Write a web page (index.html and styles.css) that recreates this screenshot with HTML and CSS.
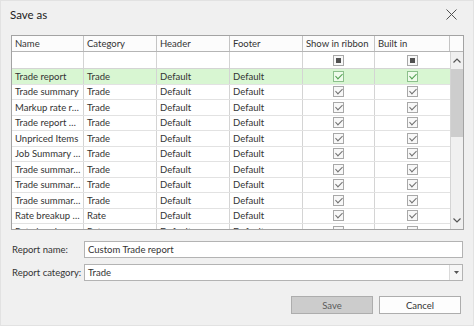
FILE: index.html
```html
<!DOCTYPE html>
<html>
<head>
  <title>Save as</title>
  <link rel="stylesheet" href="styles.css">
</head>
<body>
  <div class="dialog">
    <div class="titlebar">
      <span class="title">Save as</span>
      <svg class="close" width="11" height="11" viewBox="0 0 11 11"><path d="M0.5 0.5 L10.5 10.5 M10.5 0.5 L0.5 10.5" stroke="#505050" stroke-width="1" fill="none"/></svg>
    </div>
    <div class="grid">
      <div class="row head">
        <div class="cell c1">Name</div>
        <div class="cell c2">Category</div>
        <div class="cell c3">Header</div>
        <div class="cell c4">Footer</div>
        <div class="cell c5">Show in ribbon</div>
        <div class="cell c6">Built in</div>
        <div class="cell c7"></div>
      </div>
      <div class="body">
        <div class="rows">
          <div class="row filter">
            <div class="cell c1"></div>
            <div class="cell c2"></div>
            <div class="cell c3"></div>
            <div class="cell c4"></div>
            <div class="cell c5 mid"><span class="chk mixed"></span></div>
            <div class="cell c6 mid"><span class="chk mixed"></span></div>
          </div>
          <div class="row data selected">
            <div class="cell c1">Trade report</div><div class="cell c2">Trade</div><div class="cell c3">Default</div><div class="cell c4">Default</div>
            <div class="cell c5 mid"><span class="chk"></span></div><div class="cell c6 mid"><span class="chk"></span></div>
          </div>
          <div class="row data">
            <div class="cell c1">Trade summary</div><div class="cell c2">Trade</div><div class="cell c3">Default</div><div class="cell c4">Default</div>
            <div class="cell c5 mid"><span class="chk"></span></div><div class="cell c6 mid"><span class="chk"></span></div>
          </div>
          <div class="row data">
            <div class="cell c1">Markup rate r…</div><div class="cell c2">Trade</div><div class="cell c3">Default</div><div class="cell c4">Default</div>
            <div class="cell c5 mid"><span class="chk"></span></div><div class="cell c6 mid"><span class="chk"></span></div>
          </div>
          <div class="row data">
            <div class="cell c1">Trade report …</div><div class="cell c2">Trade</div><div class="cell c3">Default</div><div class="cell c4">Default</div>
            <div class="cell c5 mid"><span class="chk"></span></div><div class="cell c6 mid"><span class="chk"></span></div>
          </div>
          <div class="row data">
            <div class="cell c1">Unpriced Items</div><div class="cell c2">Trade</div><div class="cell c3">Default</div><div class="cell c4">Default</div>
            <div class="cell c5 mid"><span class="chk"></span></div><div class="cell c6 mid"><span class="chk"></span></div>
          </div>
          <div class="row data">
            <div class="cell c1">Job Summary …</div><div class="cell c2">Trade</div><div class="cell c3">Default</div><div class="cell c4">Default</div>
            <div class="cell c5 mid"><span class="chk"></span></div><div class="cell c6 mid"><span class="chk"></span></div>
          </div>
          <div class="row data">
            <div class="cell c1">Trade summar…</div><div class="cell c2">Trade</div><div class="cell c3">Default</div><div class="cell c4">Default</div>
            <div class="cell c5 mid"><span class="chk"></span></div><div class="cell c6 mid"><span class="chk"></span></div>
          </div>
          <div class="row data">
            <div class="cell c1">Trade summar…</div><div class="cell c2">Trade</div><div class="cell c3">Default</div><div class="cell c4">Default</div>
            <div class="cell c5 mid"><span class="chk"></span></div><div class="cell c6 mid"><span class="chk"></span></div>
          </div>
          <div class="row data">
            <div class="cell c1">Trade summar…</div><div class="cell c2">Trade</div><div class="cell c3">Default</div><div class="cell c4">Default</div>
            <div class="cell c5 mid"><span class="chk"></span></div><div class="cell c6 mid"><span class="chk"></span></div>
          </div>
          <div class="row data">
            <div class="cell c1">Rate breakup …</div><div class="cell c2">Rate</div><div class="cell c3">Default</div><div class="cell c4">Default</div>
            <div class="cell c5 mid"><span class="chk"></span></div><div class="cell c6 mid"><span class="chk"></span></div>
          </div>
          <div class="row data">
            <div class="cell c1">Rate breakup …</div><div class="cell c2">Rate</div><div class="cell c3">Default</div><div class="cell c4">Default</div>
            <div class="cell c5 mid"><span class="chk"></span></div><div class="cell c6 mid"><span class="chk"></span></div>
          </div>
        </div>
        <div class="scrollbar">
          <div class="arrow"><svg width="8" height="5" viewBox="0 0 8 5"><path d="M0.5 4.5 L4 1 L7.5 4.5" stroke="#555" stroke-width="1.2" fill="none"/></svg></div>
          <div class="thumb"></div>
          <div class="track"></div>
          <div class="arrow"><svg width="8" height="5" viewBox="0 0 8 5"><path d="M0.5 0.5 L4 4 L7.5 0.5" stroke="#555" stroke-width="1.2" fill="none"/></svg></div>
        </div>
      </div>
    </div>
    <div class="fields">
      <div class="field">
        <span class="label">Report name:</span>
        <div class="input">Custom Trade report</div>
      </div>
      <div class="field">
        <span class="label">Report category:</span>
        <div class="input combo">
          <span class="value">Trade</span>
          <span class="drop"><svg width="5" height="3" viewBox="0 0 5 3"><path d="M0 0 L5 0 L2.5 3 Z" fill="#555"/></svg></span>
        </div>
      </div>
    </div>
    <div class="buttons">
      <div class="btn save">Save</div>
      <div class="btn cancel">Cancel</div>
    </div>
  </div>
</body>
</html>
```

FILE: styles.css
```css
body {
  margin: 0;
  padding: 0;
  background: #f0f0f0;
  font-family: Lato, "Open Sans", sans-serif;
  font-size: 9.5px;
  color: #333;
}
.dialog {
  width: 474px;
  height: 326px;
  box-sizing: border-box;
  border: 1px solid #e2e2e2;
  display: flex;
  flex-direction: column;
  overflow: hidden;
}
.titlebar {
  height: 26px;
  display: flex;
  justify-content: space-between;
  align-items: center;
  padding: 0 16px 0 9px;
}
.title {
  font-size: 11.5px;
  color: #222;
}
.grid {
  margin: 8px 0 0 10px;
  width: 453px;
  box-sizing: border-box;
  border: 1px solid #a3a3a3;
  background: white;
}
.row {
  display: flex;
}
.cell {
  box-sizing: border-box;
  border-right: 1px solid #d4d4d4;
  padding-left: 3px;
  white-space: nowrap;
  overflow: hidden;
  display: flex;
  align-items: center;
}
.c1 { width: 72px; }
.c2 { width: 73px; }
.c3 { width: 73px; }
.c4 { width: 73px; }
.c5 { width: 72px; }
.c6 { width: 75px; border-right: none; }
.c7 { width: 13px; border-right: none; }
.head {
  height: 15px;
  border-bottom: 1px solid #b5b5b5;
  background: #fcfcfc;
}
.head .cell {
  border-right-color: #c4c4c4;
}
.head .c6 {
  border-right: 1px solid #c4c4c4;
}
.body {
  display: flex;
  height: 177px;
  overflow: hidden;
}
.rows {
  width: 438px;
  border-right: 1px solid #d4d4d4;
}
.filter {
  height: 16px;
  border-bottom: 1px solid #d4d4d4;
}
.data {
  height: 15.5px;
  box-sizing: border-box;
  border-bottom: 1px solid #e2e2e2;
}
.selected {
  background: #d8f6d2;
}
.mid {
  justify-content: center;
  padding-left: 0;
}
.chk {
  width: 11px;
  height: 11px;
  box-sizing: border-box;
  border: 1px solid #a8a8a8;
  background: #f8f8f8;
  position: relative;
}
.chk::after {
  content: "";
  position: absolute;
  left: 3px;
  top: 0px;
  width: 3px;
  height: 6px;
  border: solid #707070;
  border-width: 0 1px 1px 0;
  transform: rotate(45deg);
}
.selected .chk {
  border-color: #8cc08c;
  background: #eefbea;
}
.selected .chk::after {
  border-color: #4f9f4f;
}
.chk.mixed::after {
  left: 2px;
  top: 2px;
  width: 5px;
  height: 5px;
  border: none;
  background: #505050;
  transform: none;
}
.scrollbar {
  width: 14px;
  display: flex;
  flex-direction: column;
  background: #f0f0f0;
}
.arrow {
  height: 17px;
  display: flex;
  justify-content: center;
  align-items: center;
}
.thumb {
  height: 68px;
  background: #cdcdcd;
}
.track {
  flex: 1;
}
.fields {
  margin: 11px 0 0 11px;
  display: flex;
  flex-direction: column;
  gap: 6px;
}
.field {
  display: flex;
  align-items: center;
}
.label {
  width: 72px;
  white-space: nowrap;
  color: #333;
}
.input {
  width: 379px;
  height: 17px;
  box-sizing: border-box;
  border: 1px solid #b3b3b3;
  background: white;
  padding-left: 3px;
  display: flex;
  align-items: center;
}
.combo {
  justify-content: space-between;
  padding-right: 0;
}
.drop {
  width: 13px;
  height: 15px;
  box-sizing: border-box;
  border-left: 1px solid #dadada;
  background: #f6f6f6;
  display: flex;
  justify-content: center;
  align-items: center;
}
.buttons {
  margin: 15px 12px 0 0;
  display: flex;
  justify-content: flex-end;
  gap: 6px;
}
.btn {
  width: 82px;
  height: 18px;
  box-sizing: border-box;
  border: 1px solid #adadad;
  display: flex;
  justify-content: center;
  align-items: center;
}
.save {
  background: #cccccc;
  color: #5a5a5a;
}
.cancel {
  background: #fdfdfd;
  color: #333;
}
```
